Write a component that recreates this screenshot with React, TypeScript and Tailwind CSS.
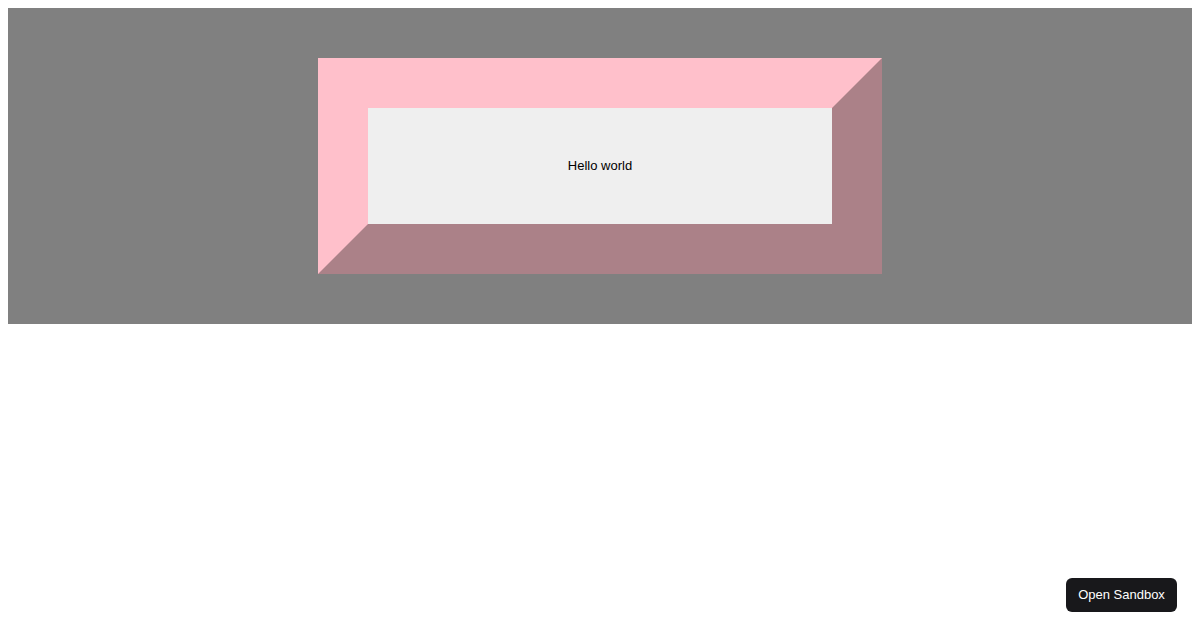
export default function App() {
  return (
    <div className="relative h-[630px] w-[1200px] bg-white p-2">
      <div className="flex justify-center bg-[#808080] p-[50px]">
        <div className="flex h-[216px] w-[564px] items-center justify-center border-[50px] border-[#ffc0cb] bg-[#efefef] font-['Liberation_Sans',Arial,sans-serif] text-[13px] text-black [border-style:outset]">
          Hello world
        </div>
      </div>
      <button className="absolute bottom-[18px] right-[23px] flex h-[34px] w-[111px] items-center justify-center rounded-md bg-[#18181b] font-['Liberation_Sans',Arial,sans-serif] text-[13px] text-white">
        Open Sandbox
      </button>
    </div>
  );
}
